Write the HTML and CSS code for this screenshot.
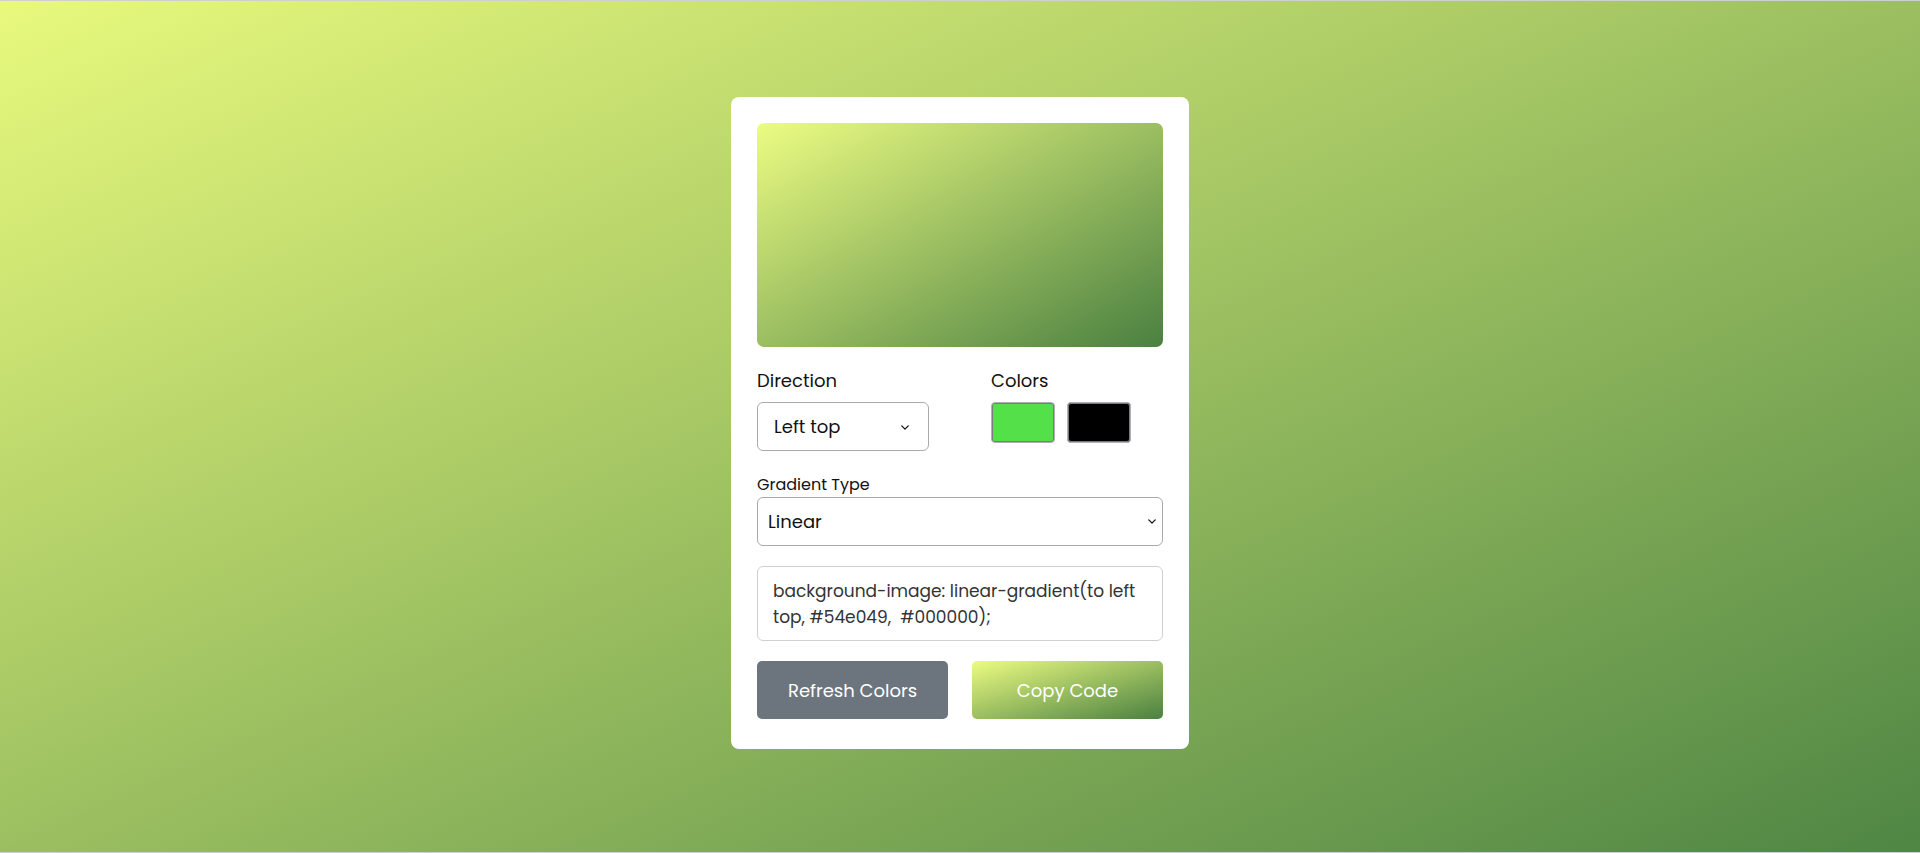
FILE: index.html
```html
<!DOCTYPE html>
<html lang="en">
<head>
<meta charset="UTF-8">
<title>Gradient Generator</title>
<link rel="stylesheet" href="styles.css">
</head>
<body>
<div class="page">
  <div class="card">
    <div class="preview"></div>
    <div class="options">
      <div class="field field-direction">
        <label class="label">Direction</label>
        <div class="select-wrap select-small">
          <select class="select">
            <option>Left top</option>
          </select>
          <svg class="chev" viewBox="0 0 10 6" width="8" height="5"><path d="M1 1l4 4 4-4" fill="none" stroke="#111" stroke-width="1.6" stroke-linecap="round" stroke-linejoin="round"/></svg>
        </div>
      </div>
      <div class="field field-colors">
        <label class="label">Colors</label>
        <div class="swatches">
          <span class="swatch swatch-green"></span>
          <span class="swatch swatch-black"></span>
        </div>
      </div>
    </div>
    <label class="label-sm">Gradient Type</label>
    <div class="select-wrap select-full">
      <select class="select select-type">
        <option>Linear</option>
      </select>
      <svg class="chev chev-full" viewBox="0 0 10 6" width="8" height="5"><path d="M1 1l4 4 4-4" fill="none" stroke="#111" stroke-width="1.6" stroke-linecap="round" stroke-linejoin="round"/></svg>
    </div>
    <div class="code">background-image: linear-gradient(to left top, #54e049,&nbsp; #000000);</div>
    <div class="buttons">
      <button class="btn btn-refresh">Refresh Colors</button>
      <button class="btn btn-copy">Copy Code</button>
    </div>
  </div>
</div>
</body>
</html>
```
FILE: styles.css
```css
* { box-sizing: border-box; }
html, body { margin: 0; padding: 0; }
body {
  font-family: Poppins, "Inter", "Noto Sans", sans-serif;
  color: #111;
}
.page {
  height: 100vh;
  border-top: 1px solid #cfcfcf;
  border-bottom: 1px solid #cfcfcf;
  background: linear-gradient(to bottom right, #e8f97d, #4f8644);
  display: flex;
  align-items: center;
  justify-content: center;
  padding-bottom: 7px;
}
.card {
  width: 458px;
  background: #fff;
  border-radius: 8px;
  padding: 26px 26px 30px;
  display: flex;
  flex-direction: column;
}
.preview {
  height: 224px;
  border-radius: 7px;
  background: linear-gradient(to bottom right, #ecfc82, #4a8040);
}
.options {
  display: flex;
  margin-top: 20px;
}
.field-direction { width: 234px; }
.label {
  display: block;
  font-size: 18px;
  line-height: 27px;
  margin-bottom: 8px;
  color: #111;
}
.select-wrap { position: relative; }
.select {
  appearance: none;
  -webkit-appearance: none;
  font-family: inherit;
  background: #fff;
  border: 1px solid #aaa;
  border-radius: 6px;
  height: 49px;
  color: #111;
  outline: none;
}
.select-small .select {
  width: 172px;
  padding: 0 16px;
  font-size: 18px;
}
.chev {
  position: absolute;
  top: 23px;
  left: 144px;
  pointer-events: none;
}
.swatches { display: flex; gap: 12px; }
.swatch {
  width: 64px;
  height: 41px;
  border: 1px solid #b2afb8;
  box-shadow: inset 0 0 0 1px #7b7880;
  border-radius: 4px;
}
.swatch-green { background: #54e049; }
.swatch-black { background: #000; }
.label-sm {
  display: block;
  margin-top: 22px;
  font-size: 16px;
  line-height: 24px;
  color: #111;
}
.select-full .select {
  width: 100%;
  padding: 0 10px;
  font-size: 18px;
}
.chev-full {
  left: auto;
  right: 7px;
  top: 22px;
}
.code {
  margin-top: 20px;
  height: 75px;
  border: 1px solid #d0d0d0;
  border-radius: 6px;
  padding: 11px 15px;
  font-size: 17px;
  line-height: 26px;
  color: #333;
}
.buttons {
  margin-top: 20px;
  display: flex;
  gap: 24px;
}
.btn {
  flex: 1;
  height: 58px;
  border: none;
  border-radius: 5px;
  font-family: inherit;
  font-size: 18px;
  color: #fff;
}
.btn-refresh { background: #6c757d; }
.btn-copy { background: linear-gradient(to bottom right, #ecfc82, #4a8040); }
```
